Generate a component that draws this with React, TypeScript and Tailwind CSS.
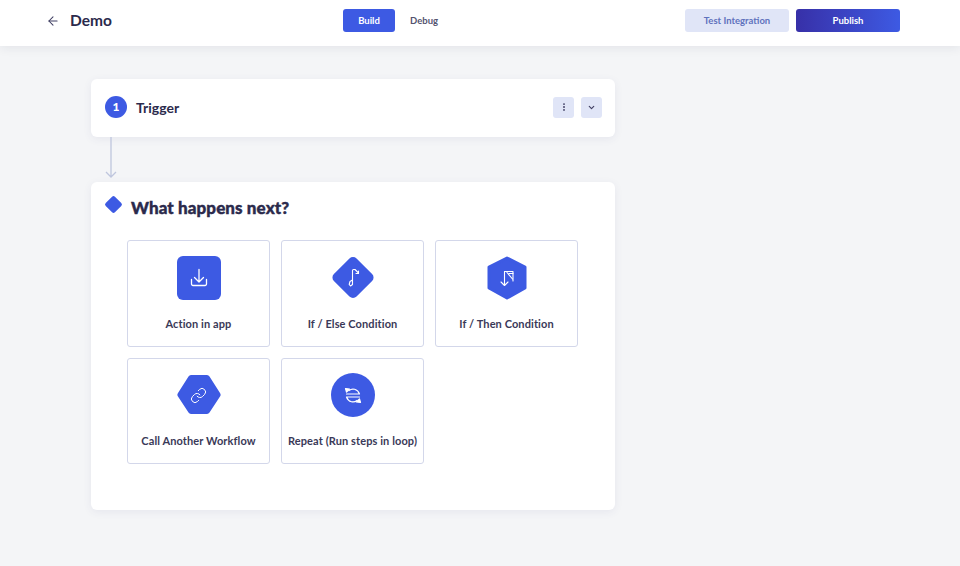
import { ArrowLeft, ChevronDown, Link, MoreVertical } from 'lucide-react';
import type { ReactNode } from 'react';

const BLUE = '#3d5ae3';

const DownloadIcon = () => (
  <div className="flex h-11 w-11 items-center justify-center rounded-md bg-[#3d5ae3]">
    <svg width="44" height="44" viewBox="0 0 44 44" fill="none" stroke="#fff" strokeWidth="1.3" strokeLinecap="round" strokeLinejoin="round">
      <path d="M22 13.5V26M17.5 21.5L22 26l4.5-4.5" />
      <path d="M14.5 23.5v4.5a1.5 1.5 0 0 0 1.5 1.5h12a1.5 1.5 0 0 0 1.5-1.5v-4.5" />
    </svg>
  </div>
);

const DiamondIcon = () => (
  <svg width="44" height="44" viewBox="0 0 44 44" fill="none">
    <rect x="6" y="5.5" width="32" height="32" rx="5" transform="rotate(45 22 21.5)" fill={BLUE} />
    <g stroke="#fff" strokeWidth="1.1" strokeLinecap="round" strokeLinejoin="round">
      <path d="M21.5 24V14.5c0-.8.5-1 1-1h1.5l3.5 3.5" />
      <path d="M27.5 15v2.5H25" />
      <path d="M21.5 24l-2.5 1.5-.8 3 1.3 1.5 2-1.5z" />
    </g>
  </svg>
);

const HexDownIcon = () => (
  <svg width="44" height="44" viewBox="0 0 44 44" fill="none">
    <polygon points="22,2 40,11 40,32 22,42 4,32 4,11" fill={BLUE} stroke={BLUE} strokeWidth="3" strokeLinejoin="round" />
    <g stroke="#fff" strokeWidth="1.1" strokeLinecap="round" strokeLinejoin="round">
      <path d="M19.5 15.5V29.5M16 26l3.5 3.5L23 26" />
      <path d="M19.5 15.5H28V25" />
      <path d="M22 16.5l5.5 6.5M28 17.5h-4" />
    </g>
  </svg>
);

const HexLinkIcon = () => (
  <div className="relative h-11 w-11">
    <svg width="44" height="44" viewBox="0 0 44 44">
      <path d="M11.5 3.5a3 3 0 0 1 2.5-1.5h16a3 3 0 0 1 2.5 1.5l10.5 16.5a3 3 0 0 1 0 3.5l-10.5 16a3 3 0 0 1-2.5 1.5h-16a3 3 0 0 1-2.5-1.5l-10.5-16a3 3 0 0 1 0-3.5z" fill={BLUE} />
    </svg>
    <div className="absolute inset-0 flex items-center justify-center text-white">
      <Link size={17} strokeWidth={1.4} />
    </div>
  </div>
);

const RepeatIcon = () => (
  <div className="flex h-11 w-11 items-center justify-center rounded-full bg-[#3d5ae3]">
    <svg width="44" height="44" viewBox="0 0 44 44" fill="none" stroke="#fff" strokeWidth="1.2" strokeLinecap="round" strokeLinejoin="round">
      <path d="M18 17.5c3-2.5 8.5-2 10.5 3.5H15.5" />
      <polygon points="14.5,15.5 18.5,16 15.5,19" fill="#fff" />
      <path d="M26 27.5c-3 2.5-8.500 2-10.500-3.500H28.500" />
      <polygon points="29.500,29.500 25.500,29 28.500,26" fill="#fff" />
    </svg>
  </div>
);

const steps: { label: string; icon: ReactNode; box: string }[] = [
  { label: 'Action in app', icon: <DownloadIcon />, box: 'h-[107px] pt-[15px]' },
  { label: 'If / Else Condition', icon: <DiamondIcon />, box: 'h-[107px] pt-[15px]' },
  { label: 'If / Then Condition', icon: <HexDownIcon />, box: 'h-[107px] pt-[15px]' },
  { label: 'Call Another Workflow', icon: <HexLinkIcon />, box: 'h-[106px] pt-[14px]' },
  { label: 'Repeat (Run steps in loop)', icon: <RepeatIcon />, box: 'h-[106px] pt-[14px]' },
];

export default function App() {
  return (
    <div className="h-[566px] overflow-hidden bg-[#f4f5f7] font-['Lato',sans-serif] text-[#2b2a4c]">
      <header className="flex h-[46px] items-center bg-white pb-[5px] pl-[46px] pr-[60px] shadow-[0_2px_10px_rgba(30,35,70,0.08)]">
        <div className="flex w-[297px] items-center">
          <ArrowLeft size={14} className="text-[#3f3e62]" strokeWidth={1.8} />
          <span className="ml-[10px] text-[15.5px] font-bold">Demo</span>
        </div>
        <button className="h-[23px] w-[52px] rounded-[3px] bg-[#3d5ae3] pt-[1px] text-[9.5px] font-bold text-white">Build</button>
        <button className="ml-[15px] pt-[1px] text-[9.5px] font-bold text-[#54536f]">Debug</button>
        <div className="ml-auto flex gap-[7px]">
          <button className="h-[23px] w-[104px] rounded-[3px] bg-[#e0e5f7] pt-[1px] text-[9.5px] font-bold text-[#5f72bd]">Test Integration</button>
          <button className="h-[23px] w-[104px] rounded-[3px] bg-linear-to-r from-[#3730a8] to-[#3d5ae3] pt-[1px] text-[9.5px] font-bold text-white">Publish</button>
        </div>
      </header>

      <main className="ml-[91px] w-[524px] pt-[33px]">
        <section className="flex h-[58px] items-center rounded-md bg-white pb-[2px] pl-[14px] pr-[13px] shadow-[0_2px_8px_rgba(60,70,130,0.08)]">
          <span className="flex h-[22px] w-[22px] items-center justify-center rounded-full bg-[#3d5ae3] text-[12px] font-black text-white">1</span>
          <span className="ml-[9px] text-[14px] font-bold">Trigger</span>
          <div className="ml-auto flex gap-[7px]">
            <button className="flex h-[21px] w-[21px] items-center justify-center rounded-[3px] bg-[#e0e5f7]">
              <MoreVertical size={10} strokeWidth={2.5} className="text-[#3f3e62]" />
            </button>
            <button className="flex h-[21px] w-[21px] items-center justify-center rounded-[3px] bg-[#e0e5f7]">
              <ChevronDown size={9} strokeWidth={3} className="text-[#3f3e62]" />
            </button>
          </div>
        </section>

        <svg width="24" height="45" viewBox="0 0 24 45" fill="none" stroke="#bfc6de" strokeWidth="1.3" className="ml-2 block">
          <path d="M12 0V40M7 35l5 5 5-5" />
        </svg>

        <section className="h-[328px] rounded-md bg-white shadow-[0_2px_8px_rgba(60,70,130,0.08)]">
          <div className="flex items-start pl-[14px] pt-[13px]">
            <span className="ml-[2px] mt-[3px] h-[13px] w-[13px] rotate-45 rounded-[2px] bg-[#3d5ae3]" />
            <h2 className="ml-[11px] mt-[1px] text-[17px] font-black leading-[24px] tracking-[0.1px] [-webkit-text-stroke:0.4px_#2b2a4c]">What happens next?</h2>
          </div>
          <div className="ml-9 mt-[20px] grid w-[451px] grid-cols-3 gap-[11px]">
            {steps.map((step) => (
              <div key={step.label} className={`flex flex-col items-center rounded-[3px] border border-[#d3d7ea] ${step.box}`}>
                {step.icon}
                <span className="mt-[16px] whitespace-nowrap text-[11px] font-bold tracking-[0.1px] text-[#3a3958]">{step.label}</span>
              </div>
            ))}
          </div>
        </section>
      </main>
    </div>
  );
}
